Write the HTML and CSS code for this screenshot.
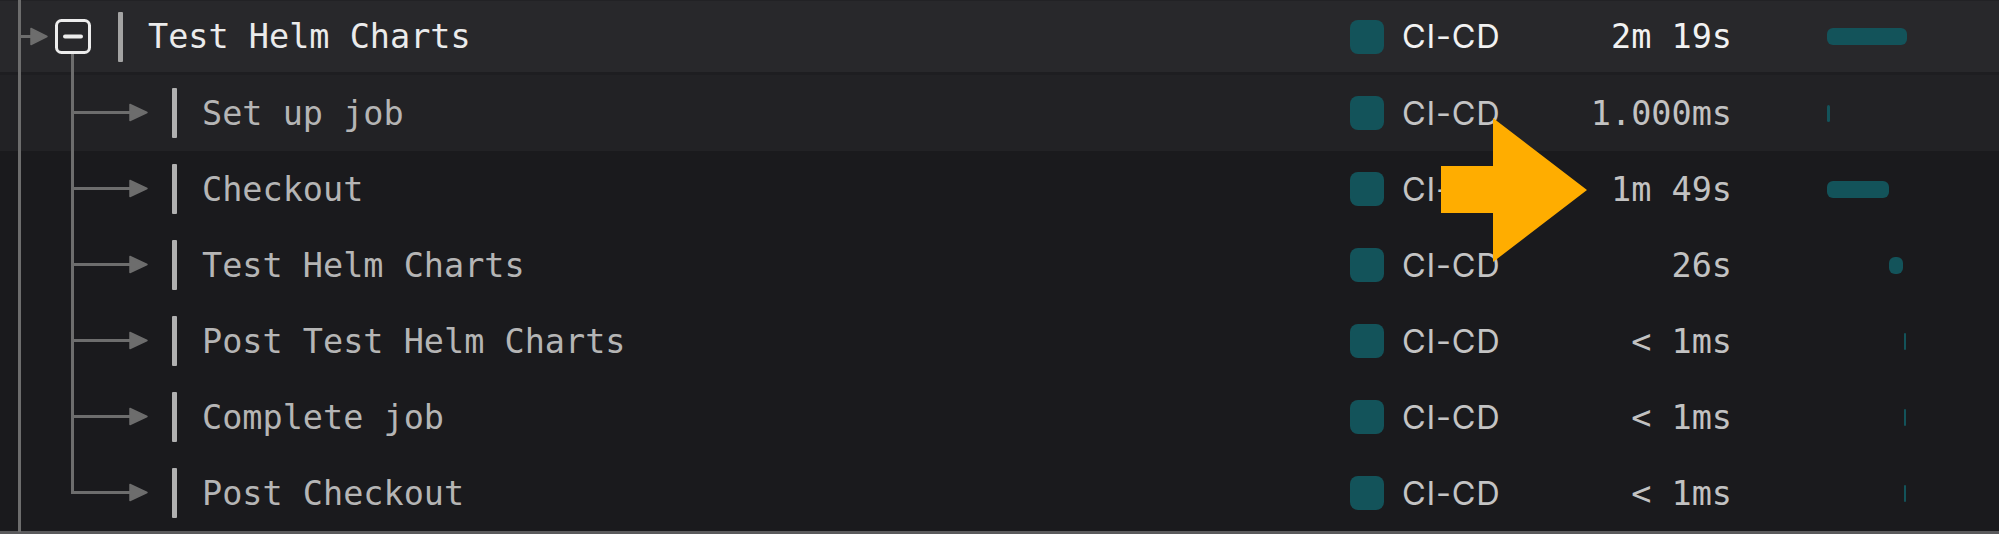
FILE: index.html
```html
<!DOCTYPE html>
<html lang="en">
<head>
    <meta charset="UTF-8">
    <meta name="viewport" content="width=device-width, initial-scale=1.0">
    <title>Job Steps</title>
    <link rel="stylesheet" href="styles.css">
</head>
<body>
    <div class="panel">
        <div class="steps">
            <!-- Job row -->
            <div class="step step-job">
                <svg class="tree tree-job" width="118" height="71" viewBox="0 0 118 71">
                    <line class="guide" x1="19.5" y1="-2" x2="19.5" y2="75"/>
                    <line class="guide" x1="19.5" y1="35.5" x2="33" y2="35.5"/>
                    <polygon class="head" points="31,27.5 47,35.5 31,43.5"/>
                    <rect class="toggle" x="56.5" y="19.5" width="33" height="32" rx="5"/>
                    <line class="toggle-minus" x1="65" y1="35.5" x2="81" y2="35.5"/>
                    <line class="guide" x1="72.5" y1="53" x2="72.5" y2="75"/>
                </svg>
                <span class="sep"></span>
                <span class="name">Test Helm Charts</span>
                <span class="team"><span class="badge"></span>CI-CD</span>
                <span class="duration">2m 19s</span>
                <span class="timeline"><span class="bar" style="margin-left:0;width:80px"></span></span>
            </div>

            <!-- Step rows -->
            <div class="step step-child step-hover">
                <svg class="tree" width="172" height="76" viewBox="0 0 172 76">
                    <line class="guide" x1="19.5" y1="-1" x2="19.5" y2="77"/>
                    <line class="guide" x1="72.5" y1="-1" x2="72.5" y2="77"/>
                    <line class="guide" x1="72.5" y1="37.5" x2="132" y2="37.5"/>
                    <polygon class="head" points="130,29.5 147,37.5 130,45.5"/>
                </svg>
                <span class="sep"></span>
                <span class="name">Set up job</span>
                <span class="team"><span class="badge"></span>CI-CD</span>
                <span class="duration">1.000ms</span>
                <span class="timeline"><span class="bar" style="margin-left:0;width:3px"></span></span>
            </div>

            <div class="step step-child">
                <svg class="tree" width="172" height="76" viewBox="0 0 172 76">
                    <line class="guide" x1="19.5" y1="-1" x2="19.5" y2="77"/>
                    <line class="guide" x1="72.5" y1="-1" x2="72.5" y2="77"/>
                    <line class="guide" x1="72.5" y1="37.5" x2="132" y2="37.5"/>
                    <polygon class="head" points="130,29.5 147,37.5 130,45.5"/>
                </svg>
                <span class="sep"></span>
                <span class="name">Checkout</span>
                <span class="team"><span class="badge"></span>CI-CD</span>
                <span class="duration">1m 49s</span>
                <span class="timeline"><span class="bar" style="margin-left:0;width:62px"></span></span>
            </div>

            <div class="step step-child">
                <svg class="tree" width="172" height="76" viewBox="0 0 172 76">
                    <line class="guide" x1="19.5" y1="-1" x2="19.5" y2="77"/>
                    <line class="guide" x1="72.5" y1="-1" x2="72.5" y2="77"/>
                    <line class="guide" x1="72.5" y1="37.5" x2="132" y2="37.5"/>
                    <polygon class="head" points="130,29.5 147,37.5 130,45.5"/>
                </svg>
                <span class="sep"></span>
                <span class="name">Test Helm Charts</span>
                <span class="team"><span class="badge"></span>CI-CD</span>
                <span class="duration">26s</span>
                <span class="timeline"><span class="bar" style="margin-left:62px;width:14px"></span></span>
            </div>

            <div class="step step-child">
                <svg class="tree" width="172" height="76" viewBox="0 0 172 76">
                    <line class="guide" x1="19.5" y1="-1" x2="19.5" y2="77"/>
                    <line class="guide" x1="72.5" y1="-1" x2="72.5" y2="77"/>
                    <line class="guide" x1="72.5" y1="37.5" x2="132" y2="37.5"/>
                    <polygon class="head" points="130,29.5 147,37.5 130,45.5"/>
                </svg>
                <span class="sep"></span>
                <span class="name">Post Test Helm Charts</span>
                <span class="team"><span class="badge"></span>CI-CD</span>
                <span class="duration">&lt; 1ms</span>
                <span class="timeline"><span class="bar" style="margin-left:77px;width:2px"></span></span>
            </div>

            <div class="step step-child">
                <svg class="tree" width="172" height="76" viewBox="0 0 172 76">
                    <line class="guide" x1="19.5" y1="-1" x2="19.5" y2="77"/>
                    <line class="guide" x1="72.5" y1="-1" x2="72.5" y2="77"/>
                    <line class="guide" x1="72.5" y1="37.5" x2="132" y2="37.5"/>
                    <polygon class="head" points="130,29.5 147,37.5 130,45.5"/>
                </svg>
                <span class="sep"></span>
                <span class="name">Complete job</span>
                <span class="team"><span class="badge"></span>CI-CD</span>
                <span class="duration">&lt; 1ms</span>
                <span class="timeline"><span class="bar" style="margin-left:77px;width:2px"></span></span>
            </div>

            <div class="step step-child">
                <svg class="tree" width="172" height="76" viewBox="0 0 172 76">
                    <line class="guide" x1="19.5" y1="-1" x2="19.5" y2="77"/>
                    <polyline class="guide" points="72.5,-1 72.5,37.5 132,37.5"/>
                    <polygon class="head" points="130,29.5 147,37.5 130,45.5"/>
                </svg>
                <span class="sep"></span>
                <span class="name">Post Checkout</span>
                <span class="team"><span class="badge"></span>CI-CD</span>
                <span class="duration">&lt; 1ms</span>
                <span class="timeline"><span class="bar" style="margin-left:77px;width:2px"></span></span>
            </div>
        </div>

        <!-- Annotation arrow -->
        <svg class="callout" width="146" height="144" viewBox="0 0 146 144">
            <polygon points="0,48 52,48 52,0 146,72 52,144 52,95 0,95"/>
        </svg>
    </div>
</body>
</html>
```

FILE: styles.css
```css
:root {
    --background: #1a1a1d;
    --row-job: #28282b;
    --row-hover: #222225;
    --divider: #1e1e21;
    --guide: #6d6d6d;
    --teal: #13535a;
    --callout: #ffad00;
    --mono: "DejaVu Sans Mono", "Liberation Mono", monospace;
    --sans: Inter, "Noto Sans", sans-serif;
}

body {
    background-color: var(--background);
    margin: 0;
}

.panel {
    position: relative;
}

.steps {
    border-bottom: 3px solid #5a5a5c;
}

.step {
    display: flex;
    align-items: center;
    height: 76px;
    box-sizing: border-box;
}

.step-job {
    height: 75px;
    background: var(--row-job);
    border-top: 1px solid #222225;
    border-bottom: 3px solid var(--divider);
}

.step-hover {
    background: var(--row-hover);
}

.tree {
    flex: none;
    overflow: visible;
}

.guide {
    stroke: var(--guide);
    stroke-width: 3;
    fill: none;
}

.head {
    fill: var(--guide);
    stroke: var(--guide);
    stroke-width: 1.5;
    stroke-linejoin: round;
}

.toggle {
    fill: var(--row-job);
    stroke: #ececec;
    stroke-width: 3;
}

.toggle-minus {
    stroke: #ececec;
    stroke-width: 4;
    stroke-linecap: round;
}

.sep {
    flex: none;
    width: 5px;
    height: 50px;
    background: #b0b0b0;
    border-radius: 1px;
}

.step-job .sep {
    background: #a3a3a3;
}

.name {
    flex: 1;
    margin-left: 25px;
    font-family: var(--mono);
    font-size: 33.5px;
    color: #b5b5b5;
    white-space: pre;
}

.step-job .name {
    color: #ebebeb;
}

.team {
    flex: none;
    width: 210px;
    display: flex;
    align-items: center;
    gap: 18px;
    font-family: var(--sans);
    font-size: 32.5px;
    letter-spacing: 0.8px;
    color: #c4c4c4;
}

.step-job .team {
    color: #f2f2f2;
}

.badge {
    width: 34px;
    height: 34px;
    border-radius: 8px;
    background: var(--teal);
}

.duration {
    flex: none;
    width: 172px;
    text-align: right;
    font-family: var(--mono);
    font-size: 33.5px;
    color: #c2c2c2;
    white-space: pre;
}

.step-job .duration {
    color: #f2f2f2;
}

.timeline {
    flex: none;
    width: 172px;
    margin-left: 95px;
    display: flex;
    align-items: center;
}

.bar {
    height: 17px;
    border-radius: 6px;
    background: var(--teal);
}

.callout {
    position: absolute;
    left: 1441px;
    top: 118px;
}

.callout polygon {
    fill: var(--callout);
}
```
